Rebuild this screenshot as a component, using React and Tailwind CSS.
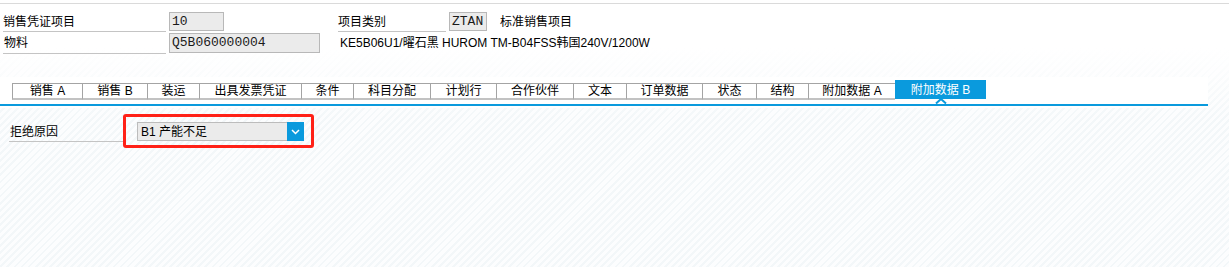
import React from 'react';

const tabs = [
  { label: '销售 A', w: 70 },
  { label: '销售 B', w: 65 },
  { label: '装运', w: 52 },
  { label: '出具发票凭证', w: 102 },
  { label: '条件', w: 52 },
  { label: '科目分配', w: 77 },
  { label: '计划行', w: 66 },
  { label: '合作伙伴', w: 77 },
  { label: '文本', w: 53 },
  { label: '订单数据', w: 76 },
  { label: '状态', w: 54 },
  { label: '结构', w: 52 },
  { label: '附加数据 A', w: 87 },
];

const font = { fontFamily: '"Liberation Sans", "Noto Sans CJK SC", sans-serif' };

const Field = ({ children, width }) => (
  <div
    className="h-[19px] bg-[#ebebeb] border border-[#b8b8b8] flex items-center pl-[2px] text-[13px] text-[#1a1a1a]"
    style={{ width, fontFamily: '"Liberation Mono", monospace' }}
  >
    {children}
  </div>
);

const App = () => {
  return (
    <div
      className="relative w-[1229px] h-[267px] overflow-hidden text-[12px] text-black bg-[linear-gradient(to_bottom,#ffffff_0%,#ffffff_18%,rgba(255,255,255,0)_45%),repeating-linear-gradient(135deg,#fcfdfe_0px,#fcfdfe_3px,#f3f7f9_3px,#f3f7f9_5px)]"
      style={font}
    >
      <div className="h-[4px] bg-white border-b border-[#dadada]" />

      {/* kopfdaten */}
      <div className="mt-[8px] flex h-[20px]">
        <div className="ml-[3px] w-[163px] h-[20px] border-b border-[#c4c4c4] flex items-center">销售凭证项目</div>
        <div className="ml-[3px]">
          <Field width={55}>10</Field>
        </div>
        <div className="ml-[114px] w-[108px] h-[20px] border-b border-[#c4c4c4] flex items-center">项目类别</div>
        <div className="ml-[3px]">
          <Field width={38}>ZTAN</Field>
        </div>
        <div className="ml-[13px] h-[19px] flex items-center">标准销售项目</div>
      </div>
      <div className="flex h-[22px]">
        <div className="ml-[3px] w-[163px] h-[22px] border-b border-[#c4c4c4] flex items-center pl-[1px]">物料</div>
        <div className="ml-[3px] mt-[1px]">
          <div
            className="w-[151px] h-[20px] bg-[#ebebeb] border border-[#b8b8b8] flex items-center pl-[2px] text-[13px] text-[#1a1a1a]"
            style={{ fontFamily: '"Liberation Mono", monospace' }}
          >
            Q5B060000004
          </div>
        </div>
        <div className="ml-[20px] h-[22px] flex items-center">KE5B06U1/曜石黑 HUROM TM-B04FSS韩国240V/1200W</div>
      </div>

      {/* tabs */}
      <div className="mt-[23px] w-[1208px] h-[31px] bg-white pt-[3px] relative">
        <div className="flex items-start pl-[12px]">
          {tabs.map((t) => (
            <div
              key={t.label}
              className="mt-[3px] h-[17px] border-t border-l border-t-[#a4a4a4] border-l-[#a4a4a4] border-b-2 border-b-[#c2c2c2] flex items-center justify-center bg-white"
              style={{ width: t.w }}
            >
              {t.label}
            </div>
          ))}
          <div className="w-[91px] h-[19px] bg-[#0a9add] text-white flex items-center justify-center">附加数据 B</div>
        </div>
        <div className="mt-[4px] h-[2px] bg-[#0a9add]" />
        <svg className="absolute left-[935px] top-[21px]" width="12" height="6" viewBox="0 0 12 6">
          <polyline points="1,5.5 6,1 11,5.5" fill="#ffffff" stroke="#0a9add" strokeWidth="2" />
        </svg>
      </div>

      {/* zusatzdaten */}
      <div className="mt-[14px] flex h-[20px]">
        <div className="ml-[9px] w-[114px] h-[20px] border-b border-[#c4c4c4] flex items-center pl-[1px]">拒绝原因</div>
        <div className="ml-[14px] w-[167px] h-[19px] bg-[#ebebeb] border border-[#bcbcbc] flex items-center">
          <span className="flex-1 pl-[3px]">B1 产能不足</span>
          <div className="w-[17px] h-[19px] -mr-[1px] -my-[1px] bg-[#0a9add] flex items-center justify-center">
            <svg width="9" height="6" viewBox="0 0 9 6">
              <polyline points="1,1 4.5,4.5 8,1" fill="none" stroke="#ffffff" strokeWidth="1.5" />
            </svg>
          </div>
        </div>
      </div>

      <div className="absolute left-[123px] top-[114px] w-[191px] h-[34px] border-[3px] border-[#ff2117] rounded-[3px]" />
    </div>
  );
};

export default App;
